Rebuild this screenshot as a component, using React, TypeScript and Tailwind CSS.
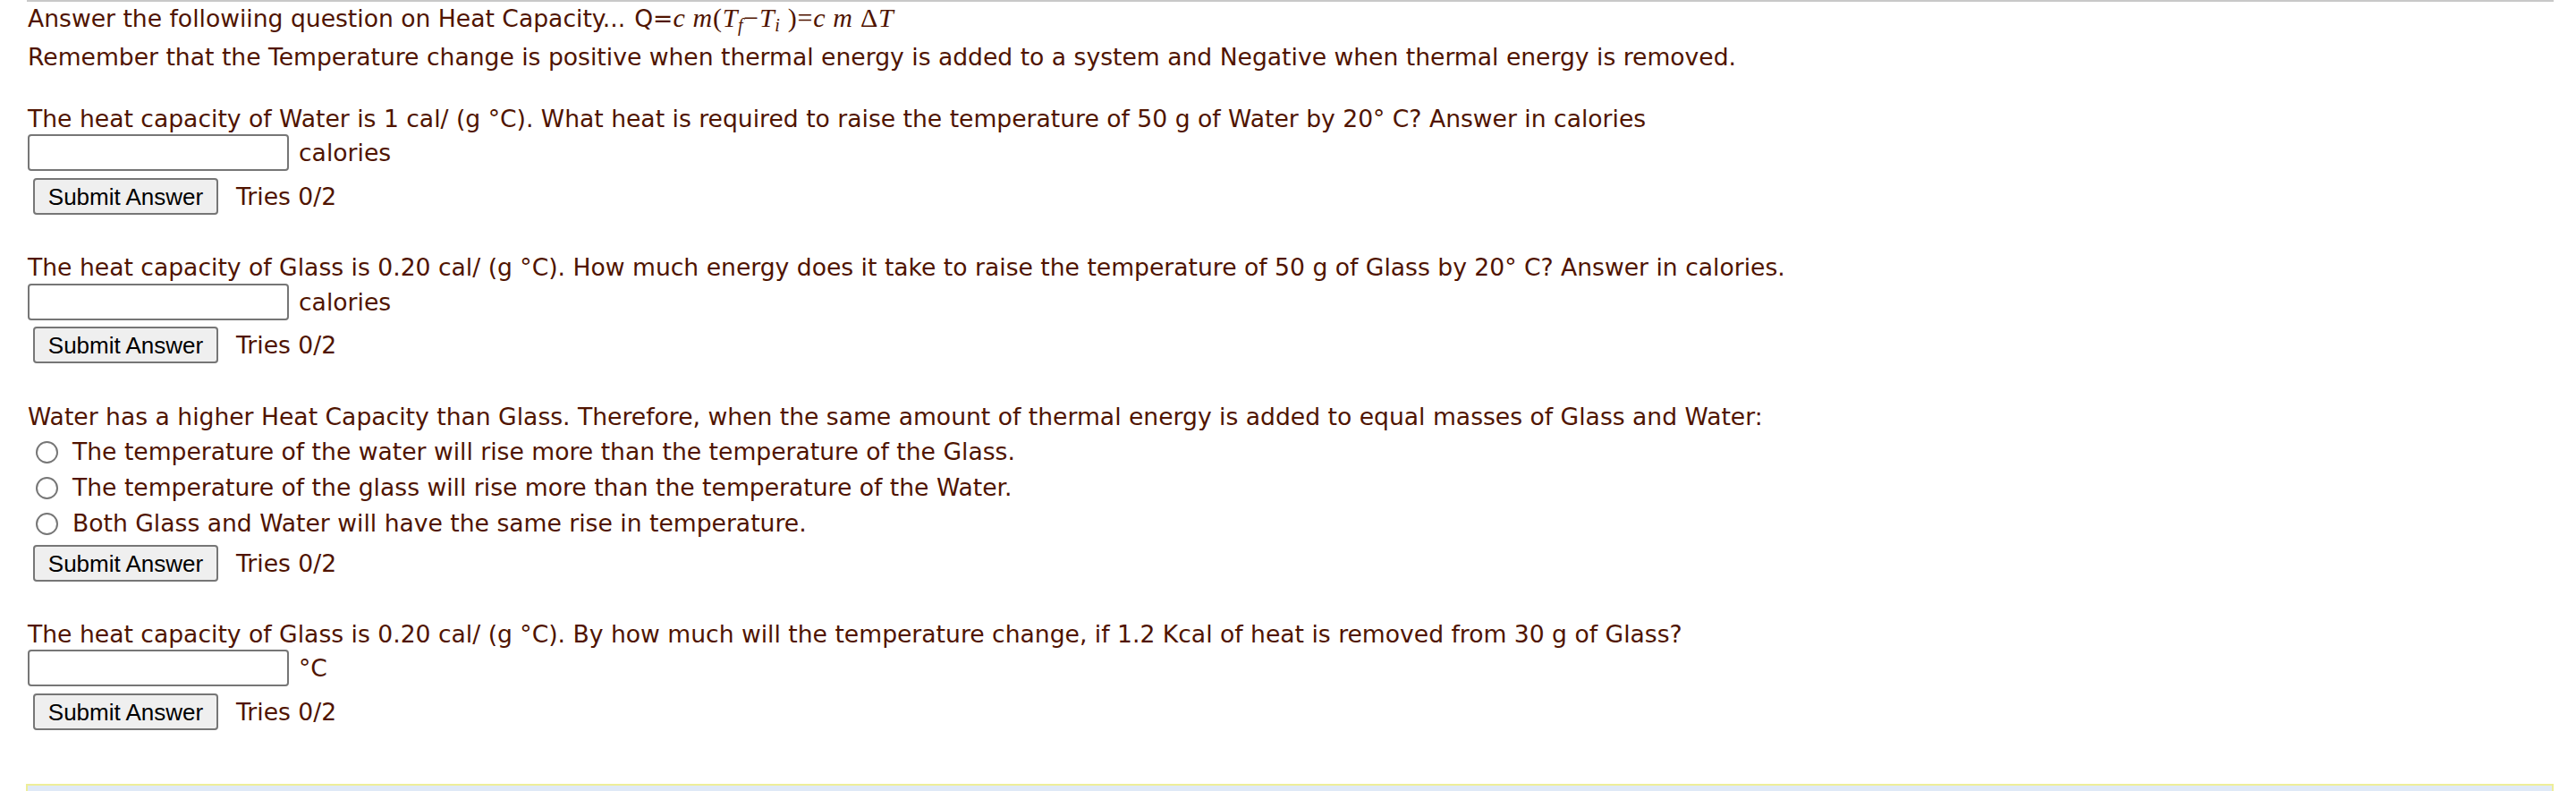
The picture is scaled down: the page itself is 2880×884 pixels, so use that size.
import React from 'react';

const text = 'text-[26.6px] leading-[32px] text-[#501400]';

function AnswerInput({ units }: { units: string }) {
  return (
    <div className="flex items-center h-[41px]">
      <input
        type="text"
        className="w-[292px] h-[41px] rounded-[4px] border-2 border-[#767676] bg-white"
      />
      <span className={`${text} ml-[11px]`}>{units}</span>
    </div>
  );
}

function SubmitRow() {
  return (
    <div className="flex items-center h-[41px] ml-[6px]">
      <button
        type="button"
        className="h-[41px] w-[207px] rounded-[4px] border-2 border-[#767676] bg-[#efefef] text-[26px] text-black font-['Liberation_Sans',Arial,sans-serif]"
      >
        Submit Answer
      </button>
      <span className={`${text} ml-[20px]`}>Tries 0/2</span>
    </div>
  );
}

function Radio({ label }: { label: string }) {
  return (
    <div className="flex items-center h-[40px]">
      <span className="ml-[9px] w-[25px] h-[25px] rounded-full border-2 border-[#767676] bg-white" />
      <span className={`${text} ml-[16px]`}>{label}</span>
    </div>
  );
}

function Formula() {
  return (
    <span className="ml-[10px]">
      Q=
      <span className="font-['Liberation_Serif','Times_New_Roman',serif] text-[30px] tracking-[0.7px]">
        <i>c</i> <i>m</i>(<i>T</i>
        <sub className="text-[20px] italic">f</sub>−<i>T</i>
        <sub className="text-[20px] italic">i</sub> )=<i>c</i> <i>m</i> Δ<i>T</i>
      </span>
    </span>
  );
}

export default function App() {
  return (
    <div className="bg-white min-h-[884px] font-['DejaVu_Sans',Verdana,sans-serif]">
      <div className="ml-[29px] mr-[25px]">
        <div className="border-t-2 border-[#c8c8c8] ml-px pl-px">
          <div className={`${text} mt-[2px] whitespace-nowrap`}>
            Answer the followiing question on Heat Capacity...
            <Formula />
          </div>
          <div className={`${text} mt-[11px]`}>
            Remember that the Temperature change is positive when thermal energy is added to a system and Negative when thermal energy is removed.
          </div>

          <div className={`${text} mt-[37px]`}>
            The heat capacity of Water is 1 cal/ (g °C). What heat is required to raise the temperature of 50 g of Water by 20° C? Answer in calories
          </div>
          <div className="mt-px">
            <AnswerInput units="calories" />
          </div>
          <div className="mt-[8px]">
            <SubmitRow />
          </div>

          <div className={`${text} mt-[43px]`}>
            The heat capacity of Glass is 0.20 cal/ (g °C). How much energy does it take to raise the temperature of 50 g of Glass by 20° C? Answer in calories.
          </div>
          <div className="mt-[2px]">
            <AnswerInput units="calories" />
          </div>
          <div className="mt-[7px]">
            <SubmitRow />
          </div>

          <div className={`${text} mt-[44px]`}>
            Water has a higher Heat Capacity than Glass. Therefore, when the same amount of thermal energy is added to equal masses of Glass and Water:
          </div>
          <div className="mt-[3px] flex flex-col">
            <Radio label="The temperature of the water will rise more than the temperature of the Glass." />
            <Radio label="The temperature of the glass will rise more than the temperature of the Water." />
            <Radio label="Both Glass and Water will have the same rise in temperature." />
          </div>
          <div className="mt-[4px]">
            <SubmitRow />
          </div>

          <div className={`${text} mt-[43px]`}>
            The heat capacity of Glass is 0.20 cal/ (g °C). By how much will the temperature change, if 1.2 Kcal of heat is removed from 30 g of Glass?
          </div>
          <div className="mt-px">
            <AnswerInput units="°C" />
          </div>
          <div className="mt-[8px]">
            <SubmitRow />
          </div>
        </div>

        <div className="mt-[60px] h-[40px] border-2 border-[#eeee99] bg-[#dfe9f7]" />
      </div>
    </div>
  );
}
